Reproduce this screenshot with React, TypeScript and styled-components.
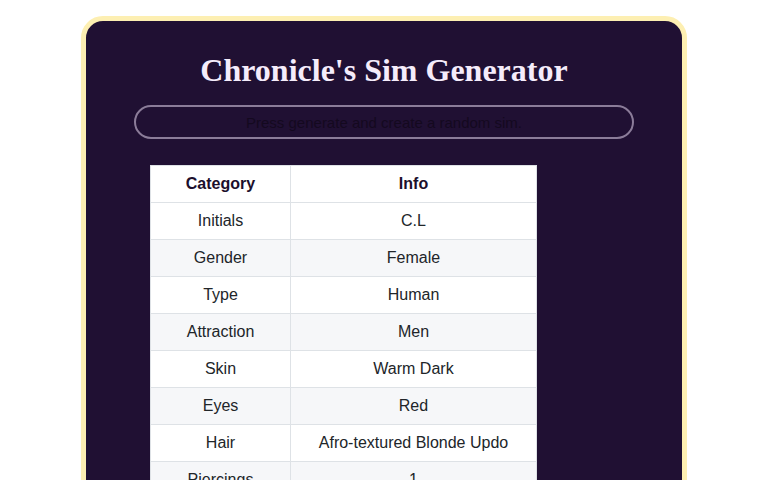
import React from 'react';
import styled, { createGlobalStyle } from 'styled-components';

const GlobalStyle = createGlobalStyle`
  body {
    margin: 0;
    background: #ffffff;
    font-family: 'Liberation Sans', Arial, sans-serif;
  }
`;

const Page = styled.div`
  display: flex;
  justify-content: center;
  padding-top: 16px;
`;

const Card = styled.div`
  width: 500px;
  background-color: #201033;
  border: 5px solid #fdefb2;
  border-radius: 22px;
  padding: 31px 48px 40px;
  display: flex;
  flex-direction: column;
  align-items: stretch;
`;

const Title = styled.h1`
  margin: 0 0 16px;
  text-align: center;
  font-family: 'Liberation Serif', 'Times New Roman', serif;
  font-size: 32px;
  line-height: 37px;
  font-weight: bold;
  color: #f5ecfb;
`;

const Prompt = styled.input`
  box-sizing: border-box;
  width: 100%;
  height: 34px;
  border: 2px solid #8b7c99;
  border-radius: 17px;
  background: transparent;
  text-align: center;
  font-family: 'Liberation Sans', Arial, sans-serif;
  font-size: 15px;
  outline: none;

  &::placeholder {
    color: #14091f;
  }
`;

const TableWrap = styled.div`
  margin-top: 26px;
  padding-left: 16px;
`;

const Table = styled.table`
  border-collapse: collapse;
  background: #ffffff;
  font-size: 16px;
  color: #212529;
`;

const Cell = styled.td<{ $wide?: boolean }>`
  width: ${(p) => (p.$wide ? '245px' : '139px')};
  padding: 6px 0;
  line-height: 24px;
  text-align: center;
  border: 1px solid #dee2e6;
`;

const HeadCell = styled(Cell).attrs({ as: 'th' })`
  font-weight: bold;
  color: #1c0f2c;
`;

const Row = styled.tr<{ $striped: boolean }>`
  background: ${(p) => (p.$striped ? '#f6f7f9' : '#ffffff')};
`;

const rows: [string, string][] = [
  ['Initials', 'C.L'],
  ['Gender', 'Female'],
  ['Type', 'Human'],
  ['Attraction', 'Men'],
  ['Skin', 'Warm Dark'],
  ['Eyes', 'Red'],
  ['Hair', 'Afro-textured Blonde Updo'],
  ['Piercings', '1'],
  ['Tattoos', 'None'],
];

export default function App() {
  return (
    <>
      <GlobalStyle />
      <Page>
        <Card>
          <Title>Chronicle's Sim Generator</Title>
          <Prompt placeholder="Press generate and create a random sim." />
          <TableWrap>
            <Table>
              <thead>
                <tr>
                  <HeadCell>Category</HeadCell>
                  <HeadCell $wide>Info</HeadCell>
                </tr>
              </thead>
              <tbody>
                {rows.map(([k, v], i) => (
                  <Row key={k} $striped={i % 2 === 1}>
                    <Cell>{k}</Cell>
                    <Cell $wide>{v}</Cell>
                  </Row>
                ))}
              </tbody>
            </Table>
          </TableWrap>
        </Card>
      </Page>
    </>
  );
}
